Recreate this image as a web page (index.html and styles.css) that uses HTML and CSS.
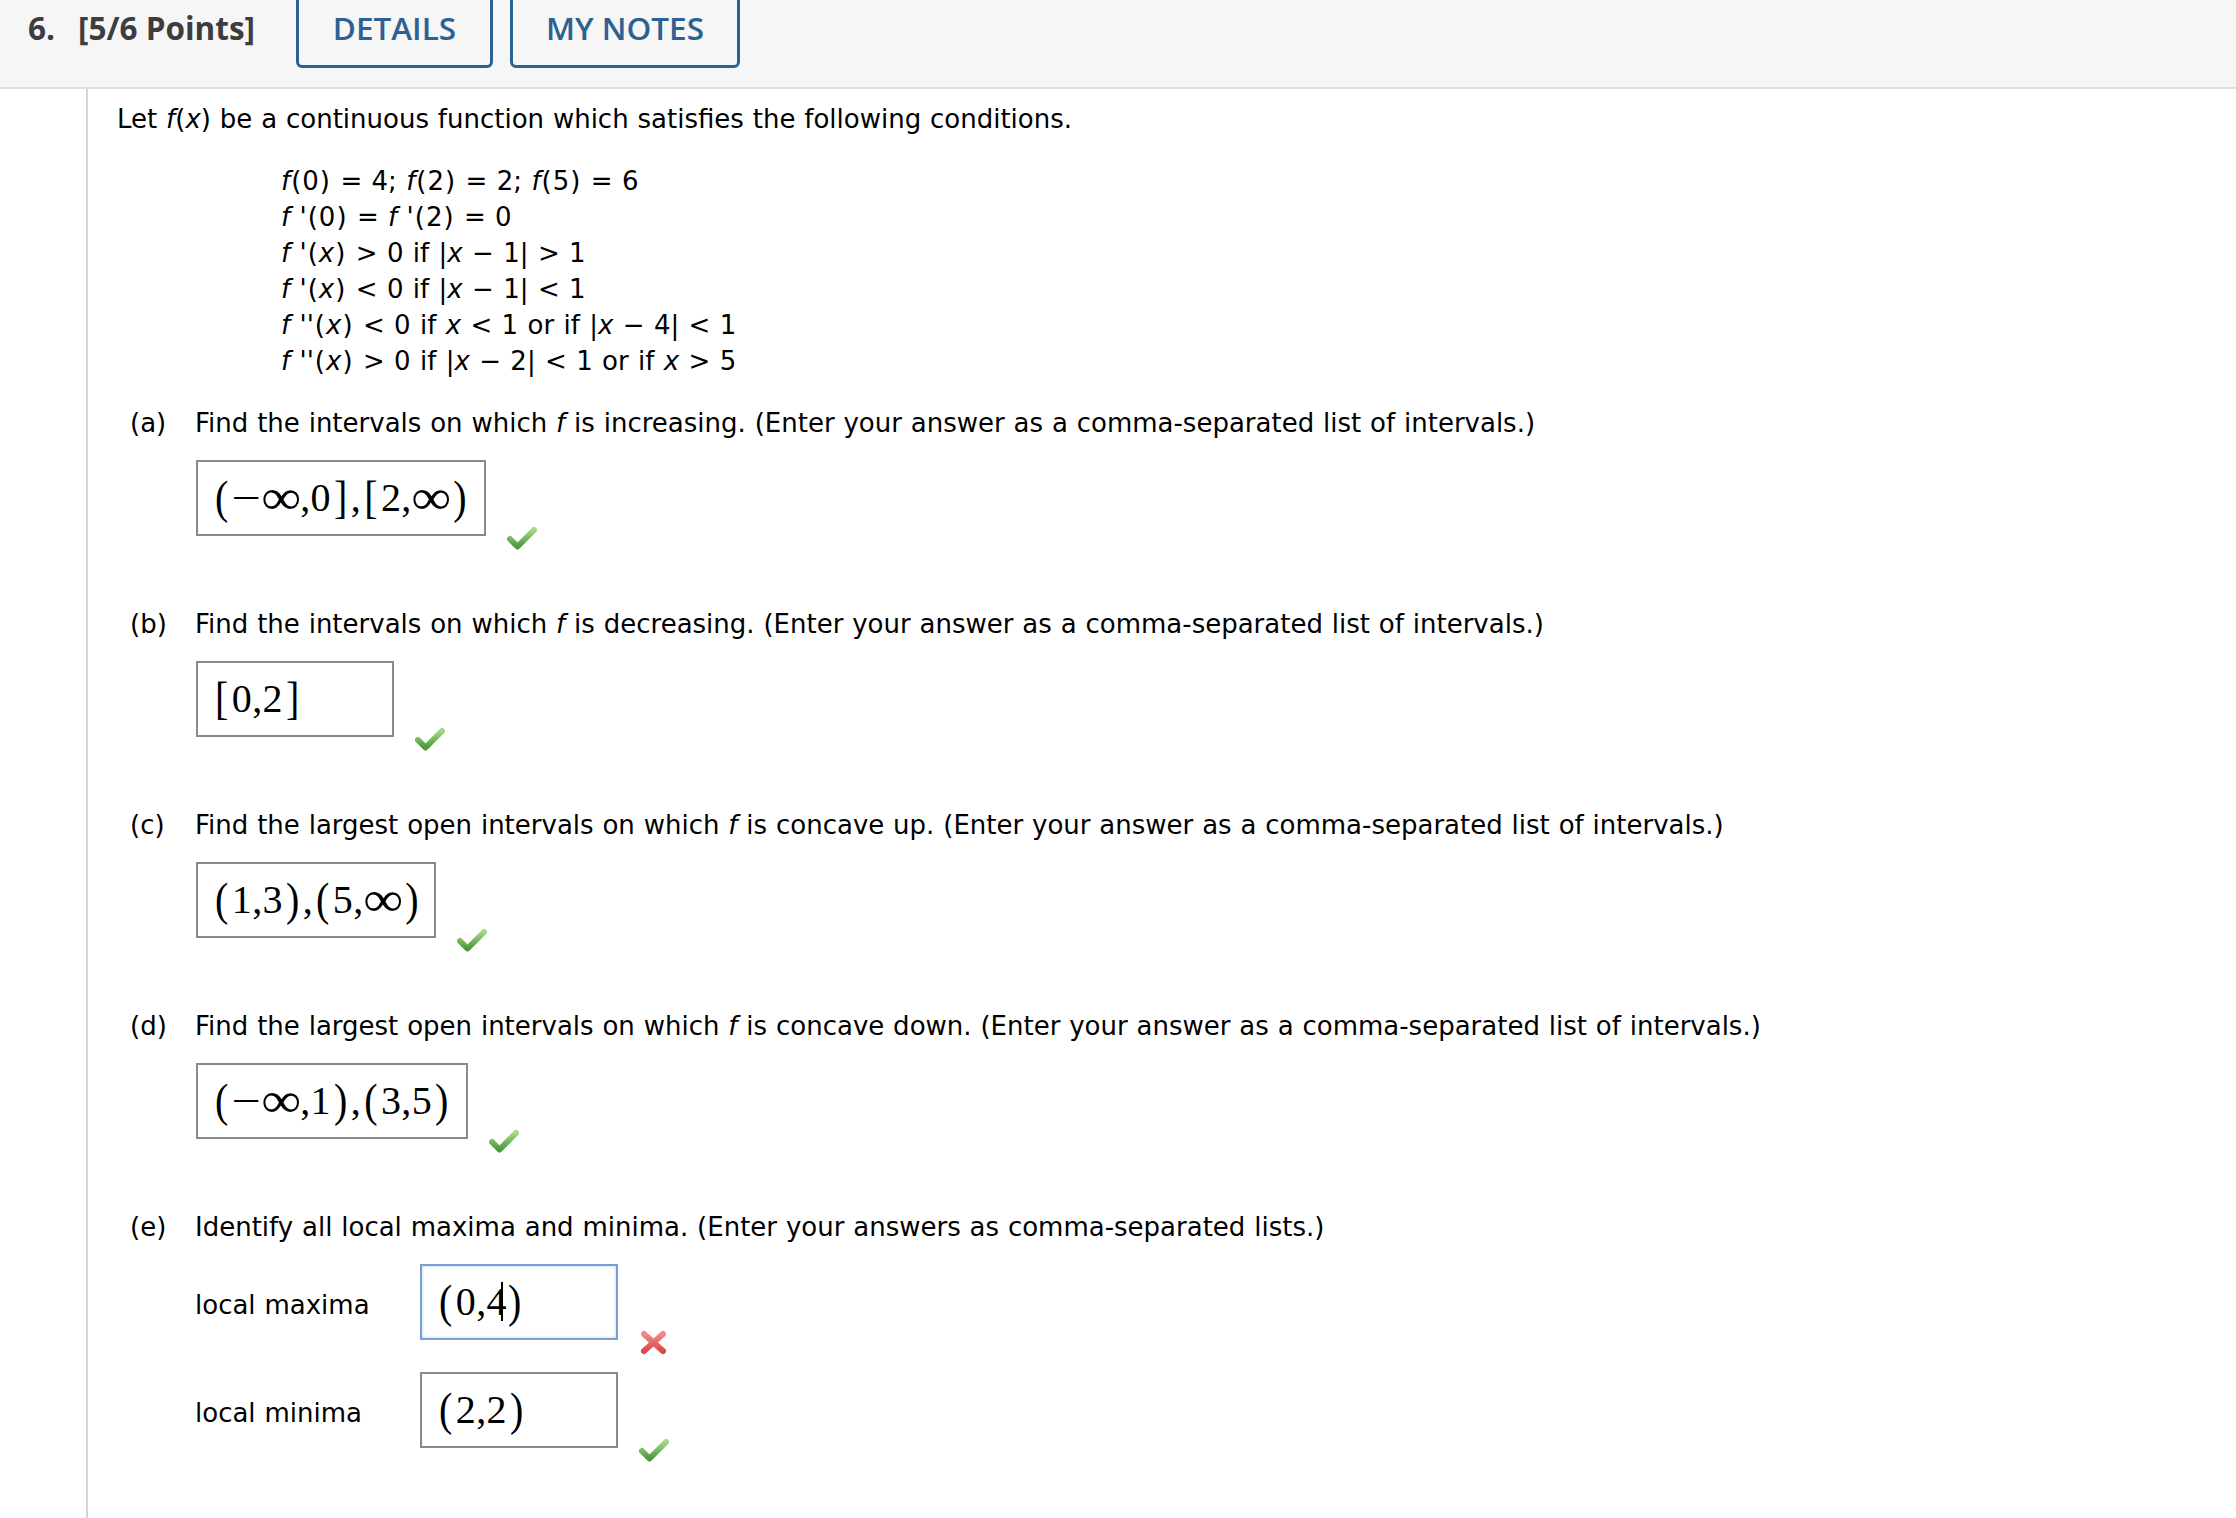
FILE: index.html
```html
<!DOCTYPE html>
<html>
<head>
<meta charset="utf-8">
<link rel="stylesheet" href="styles.css">
</head>
<body>
<svg class="defs" width="0" height="0" aria-hidden="true">
  <defs>
    <linearGradient id="gChk" x1="0" y1="0" x2="0" y2="1">
      <stop offset="0" stop-color="#a8d886"/>
      <stop offset="1" stop-color="#4a9a3a"/>
    </linearGradient>
    <linearGradient id="gX" x1="0" y1="0" x2="0" y2="1">
      <stop offset="0" stop-color="#f28a8a"/>
      <stop offset="1" stop-color="#d84a4a"/>
    </linearGradient>
  </defs>
</svg>

<div class="header">
  <div class="qnum"><span class="num">6.</span><span class="pts">[5/6 Points]</span></div>
  <div class="tabs">
    <div class="tab tab-details">DETAILS</div>
    <div class="tab tab-notes">MY NOTES</div>
  </div>
</div>

<div class="content">
  <p class="intro">Let <i>f</i>(<i>x</i>) be a continuous function which satisfies the following conditions.</p>
  <div class="conds">
    <div><i>f</i><b>(</b>0<b>)</b> = 4; <i>f</i><b>(</b>2<b>)</b> = 2; <i>f</i><b>(</b>5<b>)</b> = 6</div>
    <div><i>f '</i><b>(</b>0<b>)</b> = <i>f '</i><b>(</b>2<b>)</b> = 0</div>
    <div><i>f '</i><b>(</b><i>x</i><b>)</b> &gt; 0 if |<i>x</i> − 1| &gt; 1</div>
    <div><i>f '</i><b>(</b><i>x</i><b>)</b> &lt; 0 if |<i>x</i> − 1| &lt; 1</div>
    <div><i>f ''</i><b>(</b><i>x</i><b>)</b> &lt; 0 if <i>x</i> &lt; 1 or if |<i>x</i> − 4| &lt; 1</div>
    <div><i>f ''</i><b>(</b><i>x</i><b>)</b> &gt; 0 if |<i>x</i> − 2| &lt; 1 or if <i>x</i> &gt; 5</div>
  </div>

  <div class="part">
    <div class="label">(a)</div>
    <div class="pbody">
      <div class="q">Find the intervals on which <i>f</i> is increasing. (Enter your answer as a comma-separated list of intervals.)</div>
      <div class="ans">
        <div class="box w-a"><span class="math"><span class="p">(</span><span class="mi">−</span><span class="inf">∞</span>,0<span class="p">]</span>,<span class="p">[</span>2,<span class="inf">∞</span><span class="p">)</span></span></div>
        <svg class="mark chk" viewBox="0 0 30 25" width="30" height="25"><path d="M3 13 L10.5 20.5 L27 4" fill="none" stroke="url(#gChk)" stroke-width="6" stroke-linecap="round" stroke-linejoin="round"/></svg>
      </div>
    </div>
  </div>

  <div class="part">
    <div class="label">(b)</div>
    <div class="pbody">
      <div class="q">Find the intervals on which <i>f</i> is decreasing. (Enter your answer as a comma-separated list of intervals.)</div>
      <div class="ans">
        <div class="box w-b"><span class="math"><span class="p">[</span>0,2<span class="p">]</span></span></div>
        <svg class="mark chk" viewBox="0 0 30 25" width="30" height="25"><path d="M3 13 L10.5 20.5 L27 4" fill="none" stroke="url(#gChk)" stroke-width="6" stroke-linecap="round" stroke-linejoin="round"/></svg>
      </div>
    </div>
  </div>

  <div class="part">
    <div class="label">(c)</div>
    <div class="pbody">
      <div class="q">Find the largest open intervals on which <i>f</i> is concave up. (Enter your answer as a comma-separated list of intervals.)</div>
      <div class="ans">
        <div class="box w-c"><span class="math"><span class="p">(</span>1,3<span class="p">)</span>,<span class="p">(</span>5,<span class="inf">∞</span><span class="p">)</span></span></div>
        <svg class="mark chk" viewBox="0 0 30 25" width="30" height="25"><path d="M3 13 L10.5 20.5 L27 4" fill="none" stroke="url(#gChk)" stroke-width="6" stroke-linecap="round" stroke-linejoin="round"/></svg>
      </div>
    </div>
  </div>

  <div class="part">
    <div class="label">(d)</div>
    <div class="pbody">
      <div class="q">Find the largest open intervals on which <i>f</i> is concave down. (Enter your answer as a comma-separated list of intervals.)</div>
      <div class="ans">
        <div class="box w-d"><span class="math"><span class="p">(</span><span class="mi">−</span><span class="inf">∞</span>,1<span class="p">)</span>,<span class="p">(</span>3,5<span class="p">)</span></span></div>
        <svg class="mark chk" viewBox="0 0 30 25" width="30" height="25"><path d="M3 13 L10.5 20.5 L27 4" fill="none" stroke="url(#gChk)" stroke-width="6" stroke-linecap="round" stroke-linejoin="round"/></svg>
      </div>
    </div>
  </div>

  <div class="part part-e">
    <div class="label">(e)</div>
    <div class="pbody">
      <div class="q">Identify all local maxima and minima. (Enter your answers as comma-separated lists.)</div>
      <div class="erow">
        <div class="elabel">local maxima</div>
        <div class="ans">
          <div class="box w-e focus"><span class="math"><span class="p">(</span>0,4<span class="caret"></span><span class="p">)</span></span></div>
          <svg class="mark x" viewBox="0 0 29 27" width="29" height="27"><path d="M5 5 L24 22 M24 5 L5 22" fill="none" stroke="url(#gX)" stroke-width="6" stroke-linecap="round"/></svg>
        </div>
      </div>
      <div class="erow">
        <div class="elabel">local minima</div>
        <div class="ans">
          <div class="box w-e"><span class="math"><span class="p">(</span>2,2<span class="p">)</span></span></div>
          <svg class="mark chk" viewBox="0 0 30 25" width="30" height="25"><path d="M3 13 L10.5 20.5 L27 4" fill="none" stroke="url(#gChk)" stroke-width="6" stroke-linecap="round" stroke-linejoin="round"/></svg>
        </div>
      </div>
    </div>
  </div>
</div>
</body>
</html>
```

FILE: styles.css
```css
html, body {
  margin: 0;
  padding: 0;
  background: #ffffff;
}

body {
  font-family: "DejaVu Sans", Verdana, sans-serif;
  font-size: 26px;
  line-height: 36px;
  word-spacing: 0.6px;
  color: #000;
  min-height: 1518px;
}

.defs {
  position: absolute;
  width: 0;
  height: 0;
}

/* Header */
.header {
  height: 87px;
  background: #f6f6f6;
  border-bottom: 2px solid #e0e0e0;
  display: flex;
  align-items: flex-start;
  overflow: hidden;
  word-spacing: 0;
}

.qnum {
  font-family: "Open Sans", sans-serif;
  font-weight: 700;
  font-size: 31.5px;
  line-height: 36px;
  color: #3d3d3d;
  padding: 10px 0 0 28px;
  display: flex;
  gap: 23px;
  width: 268px;
}

.tabs {
  display: flex;
  gap: 17px;
}

.tab {
  box-sizing: border-box;
  height: 72px;
  margin-top: -4px;
  border: 3px solid #2c6194;
  border-radius: 0 0 6px 6px;
  font-family: "Open Sans", sans-serif;
  font-weight: 600;
  font-size: 31.5px;
  line-height: 30px;
  color: #2c6194;
  padding-top: 14px;
  text-align: center;
}

.tab-details { width: 197px; }
.tab-notes { width: 230px; }

/* Content */
.content {
  margin-left: 86px;
  border-left: 2px solid #d4d4d4;
  padding: 12px 0 40px 29px;
  min-height: 1380px;
}

.intro {
  margin: 0;
}

.conds {
  margin: 26px 0 0 164px;
  word-spacing: 1.1px;
}

.conds b {
  font-weight: normal;
  padding: 0 1px;
}

.part {
  display: flex;
  margin: 26px 0 0 13px;
}

.part + .part {
  margin-top: 70px;
}

.label {
  width: 65px;
  flex: none;
}

.q {
  margin-bottom: 19px;
}

.ans {
  display: flex;
  align-items: flex-end;
  gap: 21px;
}

.box {
  box-sizing: border-box;
  height: 76px;
  border: 2px solid #8a8a8a;
  background: #fff;
  padding-left: 14px;
  display: flex;
  align-items: center;
  margin-left: 1px;
}

.box.focus {
  border-color: #7aa0d0;
  box-shadow: inset 0 0 3px rgba(110, 155, 215, 0.55);
}

.w-a { width: 290px; }
.w-b { width: 198px; }
.w-c { width: 240px; }
.w-d { width: 272px; }
.w-e { width: 198px; }

.math {
  font-family: "Liberation Serif", "Times New Roman", serif;
  font-size: 40px;
  line-height: 44px;
  letter-spacing: 0.4px;
  color: #000;
  white-space: nowrap;
}

.math .p {
  display: inline-block;
  transform: scaleY(1.18);
  margin: 0 3px;
}

.math .mi {
  display: inline-block;
  transform: scaleX(1.3);
  margin: 0 4px 0 3px;
}

.math .inf {
  display: inline-block;
  transform: scale(1.4, 1.25);
  margin: 0 5px;
  letter-spacing: 0;
}

.caret {
  display: inline-block;
  width: 2px;
  height: 39px;
  background: #000;
  vertical-align: -6px;
  margin-left: -6px;
  margin-right: 2px;
}

.mark {
  flex: none;
  display: block;
}

.mark.chk {
  margin-bottom: -15px;
}

.mark.x {
  margin-bottom: -16px;
}

/* Part (e) */
.erow {
  display: flex;
  align-items: center;
}

.erow + .erow {
  margin-top: 32px;
}

.elabel {
  width: 224px;
  flex: none;
  padding-top: 6px;
}
```
